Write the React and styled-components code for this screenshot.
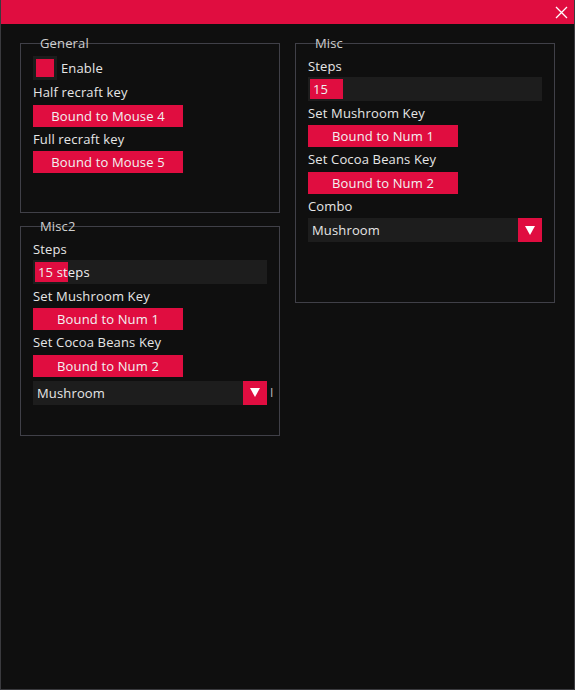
import React from 'react';
import styled, { createGlobalStyle } from 'styled-components';

const GlobalStyle = createGlobalStyle`
  html, body {
    margin: 0;
    padding: 0;
    background: #0f0f0f;
  }
  * {
    box-sizing: border-box;
  }
`;

const Window = styled.div`
  width: 575px;
  height: 690px;
  background: #0f0f0f;
  border: 1px solid #3a3a3e;
  border-top: none;
  font-family: "Open Sans", "Liberation Sans", sans-serif;
  font-size: 13px;
  letter-spacing: 0.15px;
  color: #e6e6e6;
  display: flex;
  flex-direction: column;
`;

const TitleBar = styled.div`
  height: 24px;
  background: #e00d40;
  display: flex;
  justify-content: flex-end;
  align-items: center;
  padding-right: 6px;
`;

const CloseButton = styled.div`
  width: 14px;
  height: 14px;
  display: flex;
  align-items: center;
  justify-content: center;
`;

const Body = styled.div`
  display: flex;
  gap: 15px;
  padding: 19px 0 0 19px;
`;

const Column = styled.div`
  display: flex;
  flex-direction: column;
  gap: 13px;
  width: 260px;
`;

const Group = styled.div`
  position: relative;
  border: 1px solid #404048;
  height: ${(p) => p.$height}px;
  padding: 12px 12px;
  display: flex;
  flex-direction: column;
  gap: 4px;
`;

const GroupTitle = styled.span`
  position: absolute;
  top: -9px;
  left: 19px;
  line-height: 16px;
  color: #cfcfcf;
`;

const Label = styled.div`
  line-height: 16.5px;
`;

const FirstLabel = styled(Label)`
  margin-top: 2px;
  margin-bottom: -2px;
`;

const CheckRow = styled.div`
  display: flex;
  align-items: center;
  gap: 4px;
`;

const CheckFrame = styled.div`
  width: 24px;
  height: 24px;
  background: #1c1c1c;
  padding: 3px;
`;

const CheckMark = styled.div`
  width: 100%;
  height: 100%;
  background: #e00d40;
`;

const KeyButton = styled.div`
  width: 150px;
  height: 22px;
  background: #e00d40;
  color: #f2f2f2;
  display: flex;
  align-items: center;
  justify-content: center;
`;

const Slider = styled.div`
  position: relative;
  width: 234px;
  height: 24px;
  background: #1d1d1d;
  padding: 2px;
  display: flex;
  align-items: center;
`;

const Grab = styled.div`
  width: 33px;
  height: 20px;
  background: #e00d40;
`;

const SliderText = styled.span`
  position: absolute;
  left: 5px;
  top: 0;
  line-height: 24px;
  color: #f0f0f0;
`;

const ComboRow = styled.div`
  display: flex;
  align-items: center;
`;

const Combo = styled.div`
  flex-shrink: 0;
  width: 234px;
  height: 24px;
  background: #1d1d1d;
  display: flex;
  align-items: center;
  justify-content: space-between;
  padding-left: 4px;
`;

const ComboArrow = styled.div`
  width: 24px;
  height: 24px;
  background: #e00d40;
  display: flex;
  align-items: center;
  justify-content: center;
`;

const SideLabel = styled.span`
  margin-left: 3px;
  font-size: 12px;
  color: #bdbdbd;
`;

const Arrow = () => (
  <svg width="10" height="9" viewBox="0 0 10 9">
    <polygon points="0,0 10,0 5,9" fill="#fff" />
  </svg>
);

const KeySlider = ({ text }) => (
  <Slider>
    <Grab />
    <SliderText>{text}</SliderText>
  </Slider>
);

const ComboBox = ({ value }) => (
  <Combo>
    <span>{value}</span>
    <ComboArrow>
      <Arrow />
    </ComboArrow>
  </Combo>
);

export default function App() {
  return (
    <>
      <GlobalStyle />
      <Window>
        <TitleBar>
          <CloseButton>
            <svg width="13" height="13" viewBox="0 0 13 13">
              <path d="M1 1L12 12M12 1L1 12" stroke="#fff" strokeWidth="1.3" />
            </svg>
          </CloseButton>
        </TitleBar>
        <Body>
          <Column>
            <Group $height={170}>
              <GroupTitle>General</GroupTitle>
              <CheckRow>
                <CheckFrame>
                  <CheckMark />
                </CheckFrame>
                <span>Enable</span>
              </CheckRow>
              <Label>Half recraft key</Label>
              <KeyButton>Bound to Mouse 4</KeyButton>
              <Label>Full recraft key</Label>
              <KeyButton>Bound to Mouse 5</KeyButton>
            </Group>
            <Group $height={210}>
              <GroupTitle>Misc2</GroupTitle>
              <FirstLabel>Steps</FirstLabel>
              <KeySlider text="15 steps" />
              <Label>Set Mushroom Key</Label>
              <KeyButton>Bound to Num 1</KeyButton>
              <Label>Set Cocoa Beans Key</Label>
              <KeyButton>Bound to Num 2</KeyButton>
              <ComboRow>
                <ComboBox value="Mushroom" />
                <SideLabel>I</SideLabel>
              </ComboRow>
            </Group>
          </Column>
          <Column>
            <Group $height={260}>
              <GroupTitle>Misc</GroupTitle>
              <FirstLabel>Steps</FirstLabel>
              <KeySlider text="15" />
              <Label>Set Mushroom Key</Label>
              <KeyButton>Bound to Num 1</KeyButton>
              <Label>Set Cocoa Beans Key</Label>
              <KeyButton>Bound to Num 2</KeyButton>
              <Label>Combo</Label>
              <ComboBox value="Mushroom" />
            </Group>
          </Column>
        </Body>
      </Window>
    </>
  );
}
